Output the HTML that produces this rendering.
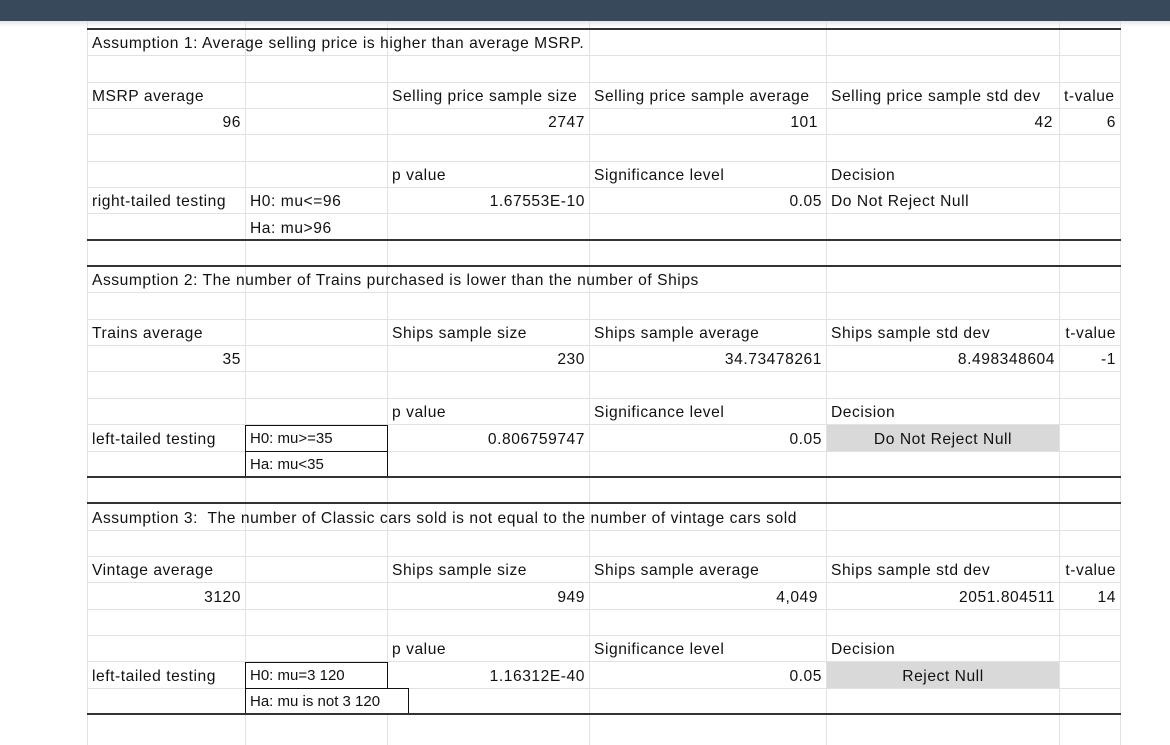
<!DOCTYPE html>
<html><head><meta charset="utf-8"><style>
body{margin:0;width:1170px;height:745px;background:#fff;position:relative;overflow:hidden;font-family:"Liberation Sans",sans-serif;}
.bar{position:absolute;left:0;top:0;width:1170px;height:21px;background:#37495a;}
.sh{position:absolute;left:0;top:21px;width:1170px;height:6px;background:linear-gradient(#e4e6e8,#fff);}
.vl{position:absolute;top:21px;height:724px;width:1px;background:#e2e2e2;}
.hl{position:absolute;left:87px;width:1034px;height:2px;background:#333;z-index:5;}
table{position:absolute;left:87px;top:29px;border-collapse:collapse;table-layout:fixed;font-size:15.6px;letter-spacing:0.55px;color:#111;}
td{height:26.35px;padding:0 4px 3px 4px;box-sizing:border-box;border:1px solid #e2e2e2;vertical-align:bottom;white-space:nowrap;overflow:visible;line-height:16px;}
.r{text-align:right;}
.c{text-align:center;}
.g{background:#d9d9d9;}
.bx{position:absolute;border:1px solid #111;background:#fff;font-size:15px;padding-left:4px;box-sizing:border-box;line-height:25px;color:#111;}
</style></head><body>
<div class="bar"></div><div class="sh"></div>
<div class="vl" style="left:87px"></div><div class="vl" style="left:245px"></div><div class="vl" style="left:387px"></div><div class="vl" style="left:589px"></div><div class="vl" style="left:826px"></div><div class="vl" style="left:1059px"></div><div class="vl" style="left:1120px"></div>
<table>
<colgroup><col style="width:158px"><col style="width:142px"><col style="width:202px"><col style="width:237px"><col style="width:233px"><col style="width:61px"></colgroup>
<tr><td colspan="6">Assumption 1: Average selling price is higher than average MSRP.</td></tr>
<tr><td></td><td></td><td></td><td></td><td></td><td></td></tr>
<tr><td>MSRP average</td><td></td><td>Selling price sample size</td><td>Selling price sample average</td><td>Selling price sample std dev</td><td>t-value</td></tr>
<tr><td class="r">96</td><td></td><td class="r">2747</td><td class="r" style="padding-right:8px">101</td><td class="r" style="padding-right:6px">42</td><td class="r">6</td></tr>
<tr><td></td><td></td><td></td><td></td><td></td><td></td></tr>
<tr><td></td><td></td><td>p value</td><td>Significance level</td><td>Decision</td><td></td></tr>
<tr><td>right-tailed testing</td><td>H0: mu&lt;=96</td><td class="r">1.67553E-10</td><td class="r">0.05</td><td>Do Not Reject Null</td><td></td></tr>
<tr><td></td><td>Ha: mu&gt;96</td><td></td><td></td><td></td><td></td></tr>
<tr><td></td><td></td><td></td><td></td><td></td><td></td></tr>
<tr><td colspan="6">Assumption 2: The number of Trains purchased is lower than the number of Ships</td></tr>
<tr><td></td><td></td><td></td><td></td><td></td><td></td></tr>
<tr><td>Trains average</td><td></td><td>Ships sample size</td><td>Ships sample average</td><td>Ships sample std dev</td><td class="r">t-value</td></tr>
<tr><td class="r">35</td><td></td><td class="r">230</td><td class="r">34.73478261</td><td class="r">8.498348604</td><td class="r">-1</td></tr>
<tr><td></td><td></td><td></td><td></td><td></td><td></td></tr>
<tr><td></td><td></td><td>p value</td><td>Significance level</td><td>Decision</td><td></td></tr>
<tr><td>left-tailed testing</td><td></td><td class="r">0.806759747</td><td class="r">0.05</td><td class="c g">Do Not Reject Null</td><td></td></tr>
<tr><td></td><td></td><td></td><td></td><td></td><td></td></tr>
<tr><td></td><td></td><td></td><td></td><td></td><td></td></tr>
<tr><td colspan="6">Assumption 3:&nbsp; The number of Classic cars sold is not equal to the number of vintage cars sold</td></tr>
<tr><td></td><td></td><td></td><td></td><td></td><td></td></tr>
<tr><td>Vintage average</td><td></td><td>Ships sample size</td><td>Ships sample average</td><td>Ships sample std dev</td><td class="r">t-value</td></tr>
<tr><td class="r">3120</td><td></td><td class="r">949</td><td class="r" style="padding-right:8px">4,049</td><td class="r">2051.804511</td><td class="r">14</td></tr>
<tr><td></td><td></td><td></td><td></td><td></td><td></td></tr>
<tr><td></td><td></td><td>p value</td><td>Significance level</td><td>Decision</td><td></td></tr>
<tr><td>left-tailed testing</td><td></td><td class="r">1.16312E-40</td><td class="r">0.05</td><td class="c g">Reject Null</td><td></td></tr>
<tr><td></td><td></td><td></td><td></td><td></td><td></td></tr>
</table>
<div class="hl" style="top:28px"></div>
<div class="hl" style="top:239px"></div>
<div class="hl" style="top:265px"></div>
<div class="hl" style="top:476px"></div>
<div class="hl" style="top:502px"></div>
<div class="hl" style="top:713px"></div>
<div class="bx" style="left:245px;top:425px;width:143px;height:27px;">H0: mu&gt;=35</div>
<div class="bx" style="left:245px;top:451px;width:143px;height:26px;">Ha: mu&lt;35</div>
<div class="bx" style="left:245px;top:662px;width:143px;height:27px;">H0: mu=3 120</div>
<div class="bx" style="left:245px;top:688px;width:164px;height:26px;">Ha: mu is not 3 120</div>
</body></html>
